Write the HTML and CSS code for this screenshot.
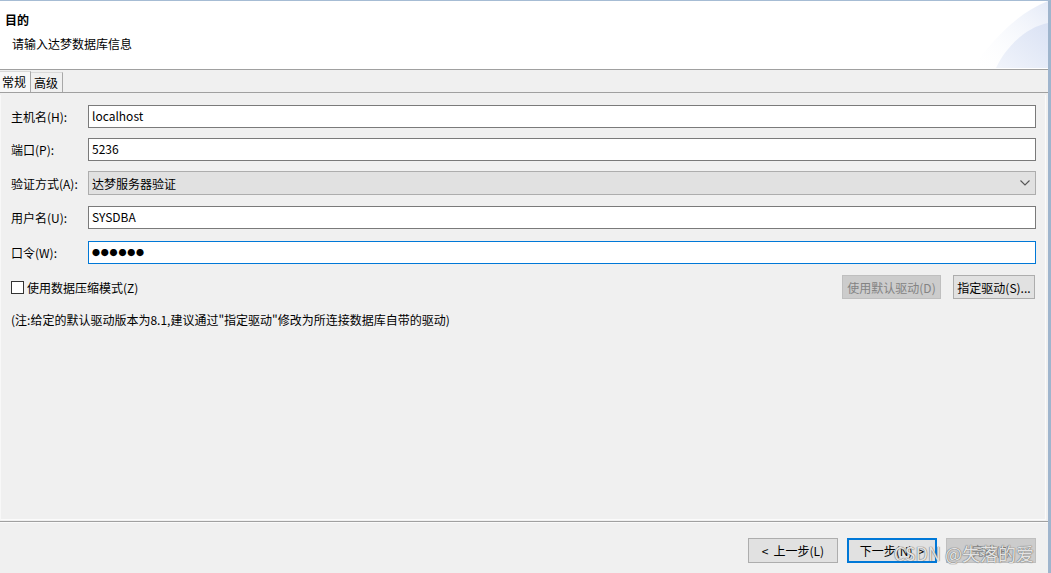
FILE: index.html
```html
<!DOCTYPE html>
<html lang="zh-CN">
<head>
<meta charset="utf-8">
<title>达梦连接</title>
<link rel="stylesheet" href="styles.css">
</head>
<body>
<div class="window">
  <div class="header">
    <div class="title">目的</div>
    <div class="subtitle">请输入达梦数据库信息</div>
    <svg class="deco" width="76" height="67" viewBox="0 0 76 67">
      <defs>
        <linearGradient id="g1" x1="0" y1="1" x2="1" y2="0">
          <stop offset="0" stop-color="#ffffff" stop-opacity="0"/>
          <stop offset="1" stop-color="#e4eaf7"/>
        </linearGradient>
        <linearGradient id="g2" x1="0" y1="1" x2="1" y2="0">
          <stop offset="0" stop-color="#f1f4fb"/>
          <stop offset="1" stop-color="#dae2f4"/>
        </linearGradient>
      </defs>
      <path d="M0 67 C 20 40, 45 12, 76 0 L76 67 Z" fill="url(#g1)"/>
      <path d="M24 67 C 34 45, 55 26, 76 22 L76 67 Z" fill="url(#g2)"/>
    </svg>
  </div>
  <div class="tabs">
    <div class="tab active">常规</div>
    <div class="tab">高级</div>
  </div>
  <div class="panel-wrap">
    <div class="panel">
      <div class="row r1">
        <div class="label">主机名(H):</div>
        <div class="field">localhost</div>
      </div>
      <div class="row r2">
        <div class="label">端口(P):</div>
        <div class="field">5236</div>
      </div>
      <div class="row r3">
        <div class="label">验证方式(A):</div>
        <div class="combo">
          <span>达梦服务器验证</span>
          <svg class="chev" width="10" height="6" viewBox="0 0 10 6"><path d="M0.5 0.5 L5 5 L9.5 0.5" fill="none" stroke="#555" stroke-width="1.1"/></svg>
        </div>
      </div>
      <div class="row r4">
        <div class="label">用户名(U):</div>
        <div class="field">SYSDBA</div>
      </div>
      <div class="row r5">
        <div class="label">口令(W):</div>
        <div class="field focused"><span class="dots">●●●●●●</span></div>
      </div>
      <div class="opts">
        <div class="check"><span class="box"></span><span>使用数据压缩模式(Z)</span></div>
        <div class="btn disabled drv1">使用默认驱动(D)</div>
        <div class="btn drv2">指定驱动(S)...</div>
      </div>
      <div class="note">(注:给定的默认驱动版本为8.1,建议通过"指定驱动"修改为所连接数据库自带的驱动)</div>
    </div>
  </div>
  <div class="footer">
    <div class="btn nav"><span class="arrow">&lt;</span>上一步(L)</div>
    <div class="btn nav primary">下一步(N)<span class="arrow r">&gt;</span></div>
    <div class="btn nav disabled">完成(F)</div>
    <div class="watermark">CSDN @失落的爱</div>
  </div>
</div>
</body>
</html>
```
FILE: styles.css
```css
* { box-sizing: border-box; }
html, body { margin: 0; padding: 0; }
body {
  width: 1051px;
  height: 573px;
  overflow: hidden;
  background: #f0f0f0;
  font-family: "Noto Sans CJK SC", "Microsoft YaHei", sans-serif;
  font-size: 12px;
  color: #000;
}
.window {
  width: 1051px;
  height: 573px;
  display: flex;
  flex-direction: column;
  border-top: 1px solid #a6bcd4;
  border-right: 3px solid #9fb5cd;
  background: #f0f0f0;
}
.header {
  position: relative;
  height: 69px;
  flex: none;
  background: #fff;
  border-bottom: 1px solid #a0a0a0;
  padding: 10px 0 0 5px;
}
.title { font-weight: bold; line-height: 17px; }
.subtitle { margin: 7px 0 0 7px; line-height: 17px; }
.deco { position: absolute; right: 0; top: 0; }
.tabs {
  flex: none;
  height: 23px;
  display: flex;
  border-bottom: 1px solid #a0a0a0;
  padding-top: 1px;
}
.tab {
  width: 31px;
  padding-left: 3px;
  line-height: 19px;
  border-right: 1px solid #a8a8a8;
  border-top: 1px solid #d8d8d8;
}
.tab.active { background: #f7f7f7; padding-left: 2px; width: 31px; }
.tab + .tab { width: 32px; margin-top: 1px; }
.panel-wrap {
  flex: 1;
  padding: 2px 2px 1px 0;
  border-bottom: 1px solid #a0a0a0;
  display: flex;
}
.panel {
  flex: 1;
  background: #f0f0f0;
  border-left: 1px solid #f8f8f8;
  border-right: 1px solid #fbfbfb;
  border-bottom: 1px solid #fbfbfb;
  padding: 10px 9px 0 10px;
}
.row { display: flex; align-items: center; }
.label { width: 77px; flex: none; }
.field {
  flex: 1;
  height: 23px;
  border: 1px solid #7a7a7a;
  background: #fff;
  padding: 0 3px;
  line-height: 20px;
}
.field.focused { border-color: #0078d7; }
.dots { font-size: 8px; letter-spacing: 0.8px; position: relative; top: -1px; }
.combo {
  flex: 1;
  height: 24px;
  border: 1px solid #adadad;
  background: #e1e1e1;
  padding: 0 3px;
  display: flex;
  align-items: center;
  justify-content: space-between;
}
.chev { margin-right: 2px; }
.r2 { margin-top: 10px; }
.r3 { margin-top: 10px; }
.r4 { margin-top: 11px; }
.r5 { margin-top: 12px; }
.opts {
  margin-top: 11px;
  display: flex;
  align-items: center;
  height: 24px;
}
.check { display: flex; align-items: center; flex: 1; }
.box {
  width: 13px;
  height: 13px;
  border: 1px solid #333;
  background: #fff;
  margin-right: 3px;
}
.btn {
  height: 24px;
  border: 1px solid #adadad;
  background: #e1e1e1;
  display: flex;
  align-items: center;
  justify-content: center;
}
.btn.disabled { background: #cccccc; border-color: #bfbfbf; color: #838383; }
.drv1 { width: 99px; }
.drv2 { width: 82px; margin-left: 12px; margin-right: 1px; }
.note { margin-top: 13px; line-height: 16px; }
.footer {
  position: relative;
  flex: none;
  height: 51px;
  border-top: 1px solid #fafafa;
  display: flex;
  justify-content: flex-end;
  gap: 9px;
  padding: 15px 12px 0 0;
}
.btn.nav { width: 90px; height: 25px; }
.btn.primary { border: 2px solid #0078d7; }
.arrow { margin-right: 5px; }
.arrow.r { margin-right: 0; margin-left: 5px; }
.watermark {
  position: absolute;
  right: 14px;
  top: 17px;
  font-size: 18px;
  color: rgba(245, 245, 245, 0.9);
  text-shadow: 0 0 1px #666, 0 0 1px #666;
  letter-spacing: 0;
}
```
